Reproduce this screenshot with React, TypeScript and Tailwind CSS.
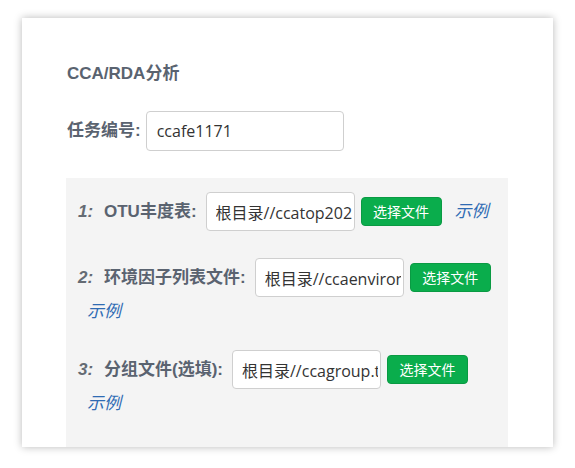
import React from "react";

const labelFont = { fontFamily: '"Liberation Sans", "Noto Sans CJK SC", sans-serif' };

function FileRow({
  num,
  label,
  value,
  className,
}: {
  num: string;
  label: string;
  value: string;
  className?: string;
}) {
  return (
    <div className={"flex flex-wrap items-center gap-x-[4px] " + (className ?? "")}>
      <div className="flex items-center font-bold text-[17px] text-[#5a6370] leading-[24px]">
        <span className="italic w-[22px] text-[#656b73]">{num}</span>
        <span className="ml-[4px]">{label}</span>
      </div>
      <input
        readOnly
        value={value}
        className="ml-[5px] w-[149px] h-[39px] rounded-[4px] border border-[#cfcfcf] bg-white pl-[9px] pr-[2px] text-[16px] text-[#333] outline-none"
        style={{ fontFamily: '"Open Sans", "Noto Sans CJK SC", sans-serif' }}
      />
      <button className="ml-[2px] h-[29px] w-[81px] rounded-[4px] border border-[#0a9a43] bg-[#0aad4c] text-[14px] text-white leading-none">
        选择文件
      </button>
      <a className="ml-[9px] h-[30px] leading-[30px] italic text-[17px] text-[#2f6bb3] cursor-pointer">示例</a>
    </div>
  );
}

export default function App() {
  return (
    <div className="w-[575px] h-[468px] bg-white pt-[18px] pl-[22px]" style={labelFont}>
      <div className="w-[531px] h-[429px] bg-white shadow-[0_0_8px_rgba(0,0,0,0.28)] overflow-hidden px-[44px] pt-[44px]">
        <h1 className="text-[17px] leading-[24px] font-bold text-[#5a6370] ml-[1px]">CCA/RDA分析</h1>
        <div className="mt-[25px] flex items-center">
          <span className="ml-[1px] font-bold text-[17px] text-[#5a6370]">任务编号:</span>
          <input
            readOnly
            value="ccafe1171"
            className="ml-[5px] w-[198px] h-[40px] rounded-[4px] border border-[#cfcfcf] bg-white pl-[10px] text-[16px] text-[#333] outline-none"
            style={{ fontFamily: '"Open Sans", "Noto Sans CJK SC", sans-serif' }}
          />
        </div>
        <div className="mt-[27px] w-[442px] h-[300px] bg-[#f4f4f4] pl-[12px] pt-[14px]">
          <FileRow num="1:" label="OTU丰度表:" value="根目录//ccatop2023.txt" />
          <FileRow className="mt-[27px]" num="2:" label="环境因子列表文件:" value="根目录//ccaenvironment.txt" />
          <FileRow className="mt-[23px]" num="3:" label="分组文件(选填):" value="根目录//ccagroup.txt" />
        </div>
      </div>
    </div>
  );
}
